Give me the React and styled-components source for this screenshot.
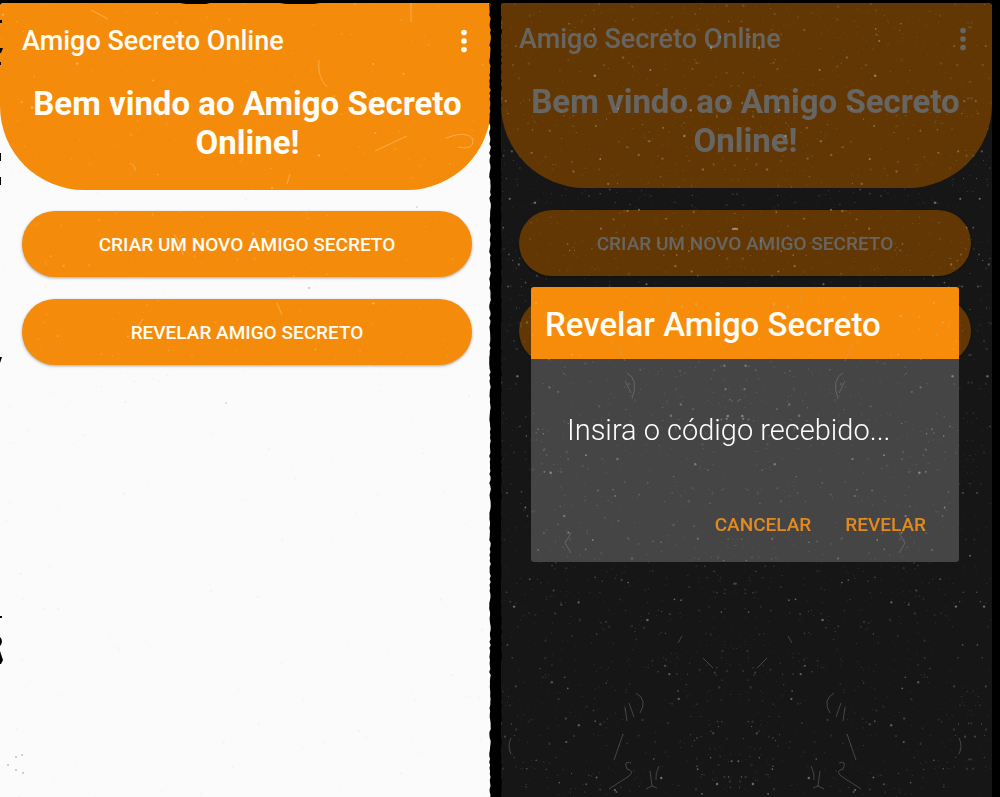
import React from 'react';
import styled, { createGlobalStyle, ThemeProvider } from 'styled-components';

const theme = {
  orange: '#f48b0b',
  light: '#fbfbfb',
  dark: '#383838',
  dialog: '#454545',
  white: '#fffdf5',
};

// small seeded generator, keeps the grain the same on every render
const createRandom = (seed) => {
  let value = seed;
  return () => {
    value = (value * 16807) % 2147483647;
    return value / 2147483647;
  };
};

const createSpecks = (seed, count, width) => {
  const random = createRandom(seed);
  return Array.from({ length: count }, () => ({
    x: random() * width,
    y: random() * 794,
    r: 0.4 + Math.pow(random(), 5) * 0.9,
    opacity: 0.14 + Math.pow(random(), 3) * 0.5,
  }));
};

// worn vertical border, filled from the outer side
const createEdge = (seed, outer, base, depth) => {
  const random = createRandom(seed);
  let d = `M${outer} 0`;
  for (let y = 0; y <= 796; y += 3) {
    d += ` L${(base + (random() - 0.5) * depth).toFixed(1)} ${y}`;
  }
  return `${d} L${outer} 796 Z`;
};

const lightSpecks = createSpecks(4821, 2000, 491);
const darkSpecks = createSpecks(9137, 2600, 236);

const Specks = ({ items }) =>
  items.map((s, i) => (
    <circle key={i} cx={s.x} cy={s.y} r={s.r} opacity={s.opacity} />
  ));

const LightGrain = () => (
  <Grain viewBox='0 0 491 794' preserveAspectRatio='xMinYMin slice' aria-hidden='true'>
    <g fill='#ffe2b0' opacity='0.8'>
      <Specks items={lightSpecks} />
    </g>
    <g fill='none' stroke='#ffd08a' strokeWidth='0.7' opacity='0.7'>
      <path d='M91 7 L108 16 M319 57 Q317 74 327 84 M411 0 V19 M446 135 q20 -8 27 1 q1 12 -15 8 M375 148 l32 -15 M130 160 q8 5 4 8 M290 171 l-3 10 M174 231 l5 8 l4 13 M277 300 l5 12 M138 323 l5 -7' />
    </g>
    <g fill='#999' opacity='0.6'>
      <circle cx='309' cy='285' r='1' />
      <circle cx='417' cy='204' r='0.8' />
      <circle cx='16' cy='754' r='1' />
      <circle cx='22' cy='752' r='1' />
      <circle cx='8' cy='762' r='1' />
      <circle cx='16' cy='767' r='1' />
      <circle cx='23' cy='770' r='1' />
      <circle cx='226' cy='400' r='0.8' />
    </g>
    <path
      d='M0 17 h2 v3 h-2z M0 45 h3 l-2 5 h-1z M0 59 h1 v3 h-1z M0 150 h1 v8 h-1z M0 174 h1 v8 h-1z M0 354 h2 l-2 6z M0 613 h2 v2 h-2z M0 634 q4 4 0 9z M0 648 l3 9 l-2 4 h-1z'
      fill='#000'
    />
    <path d={createEdge(77, 493, 490, 1.6)} fill='#000' />
    <path d='M280 0 h40 l-6 1 h-28z M180 0 h30 l-4 1 h-20z' fill='#000' />
  </Grain>
);

const DarkGrain = () => (
  <Grain viewBox='0 0 491 794' preserveAspectRatio='xMinYMin slice' aria-hidden='true'>
    <defs>
      <g id='dust-half'>
        <g fill='#d8d2c8' opacity='0.75'>
          <Specks items={darkSpecks} />
        </g>
        <g fill='none' stroke='#b5b0a8' strokeWidth='0.7' opacity='0.45'>
          <path d='M124 731 l-9 26 M130 700 l5 14 M126 704 l2 14 M137 690 q12 7 4 20 M128 370 q12 6 5 26 M126 378 l6 12 M132 760 q-8 -3 -4 6 q8 2 2 7 l-20 13 M160 763 q-4 8 -3 14 M151 768 l2 15 l-6 3 M153 783 l5 2 M12 735 q-4 8 0 16 M179 640 l4 -7 M204 655 l10 10 M72 530 l-6 10 l6 10 M120 305 l5 12 M118 340 l8 18 M170 290 v8' />
        </g>
      </g>
    </defs>
    <use href='#dust-half' x='-2' />
    <use href='#dust-half' transform='translate(470 0) scale(-1 1)' />
    <g fill='#d8d2c8' opacity='0.75' transform='translate(468 0)'>
      <Specks items={darkSpecks.filter((s) => s.x < 22)} />
    </g>
    <path d={createEdge(31, -2, 0, 2)} fill='#000' />
  </Grain>
);

const AppBar = ({ title }) => (
  <Toolbar>
    <ToolbarTitle>{title}</ToolbarTitle>
    <MenuButton type='button' aria-label='Menu'>
      <svg viewBox='0 0 24 24' width='34' height='34' fill='currentColor'>
        <circle cx='12' cy='6' r='2' />
        <circle cx='12' cy='12' r='2' />
        <circle cx='12' cy='18' r='2' />
      </svg>
    </MenuButton>
  </Toolbar>
);

const Home = ({ dark }) => (
  <>
    <Header $dark={dark}>
      <AppBar title='Amigo Secreto Online' />
      <Welcome>Bem vindo ao Amigo Secreto Online!</Welcome>
    </Header>
    <Actions $dark={dark}>
      <ActionButton type='button'>Criar um novo amigo secreto</ActionButton>
      <ActionButton type='button'>Revelar amigo secreto</ActionButton>
    </Actions>
  </>
);

const RevealDialog = () => (
  <Backdrop>
    <Dialog role='dialog' aria-labelledby='reveal-title'>
      <DialogTitle id='reveal-title'>Revelar Amigo Secreto</DialogTitle>
      <DialogBody>
        <CodeInput
          type='text'
          aria-label='Insira o código recebido...'
          placeholder='Insira o código recebido...'
        />
        <DialogActions>
          <TextButton type='button'>Cancelar</TextButton>
          <TextButton type='button'>Revelar</TextButton>
        </DialogActions>
      </DialogBody>
    </Dialog>
  </Backdrop>
);

const App = () => {
  return (
    <ThemeProvider theme={theme}>
      <GlobalStyle />
      <Page>
        <Screen>
          <Home />
          <LightGrain />
        </Screen>
        <Screen $dark>
          <Home dark />
          <RevealDialog />
          <DarkGrain />
        </Screen>
      </Page>
    </ThemeProvider>
  );
};

const GlobalStyle = createGlobalStyle`
  * {
    box-sizing: border-box;
  }

  body {
    margin: 0;
    background: #000;
    font-family: Roboto, 'Liberation Sans', sans-serif;
  }

  button,
  input {
    font-family: inherit;
    border: 0;
    padding: 0;
    margin: 0;
    background: none;
  }
`;

const Page = styled.main`
  min-height: 100vh;
  display: grid;
  grid-template-columns: 1fr 1fr;
  gap: 10px;
  padding: 3px 8px 0 0;
`;

const Screen = styled.section`
  position: relative;
  overflow: hidden;
  border-radius: 4px 4px 0 0;
  background: ${({ theme, $dark }) => ($dark ? theme.dark : theme.light)};
`;

const Header = styled.header`
  background: ${({ theme }) => theme.orange};
  color: ${({ theme }) => theme.white};
  border-radius: 0 0 84px 84px;
  padding: ${({ $dark }) => ($dark ? '0 20px 28px 18px' : '2px 18px 28px 22px')};
`;

const Toolbar = styled.div`
  display: flex;
  align-items: center;
  justify-content: space-between;
  height: 72px;
`;

const ToolbarTitle = styled.span`
  font-size: 27px;
  font-weight: 500;
`;

const MenuButton = styled.button`
  display: flex;
  justify-content: center;
  width: 18px;
  color: inherit;

  svg {
    flex-shrink: 0;
  }
`;

const Welcome = styled.h1`
  margin: 7px 0 0;
  font-size: 33px;
  line-height: 39px;
  font-weight: 700;
  text-align: center;
`;

const Actions = styled.div`
  display: flex;
  flex-direction: column;
  gap: 22px;
  padding: ${({ $dark }) => ($dark ? '22px 21px 0 18px' : '21px 19px 0 22px')};
`;

const ActionButton = styled.button`
  height: 66px;
  border-radius: 33px;
  background: ${({ theme }) => theme.orange};
  color: ${({ theme }) => theme.white};
  font-size: 19px;
  font-weight: 500;
  text-transform: uppercase;
  box-shadow: 0 1px 3px rgba(0, 0, 0, 0.35);
`;

const Backdrop = styled.div`
  position: absolute;
  inset: 0;
  padding: 284px 33px 0 30px;
  background: rgba(0, 0, 0, 0.6);
`;

const Dialog = styled.div`
  overflow: hidden;
  border-radius: 3px;
  background: ${({ theme }) => theme.dialog};
`;

const DialogTitle = styled.h2`
  margin: 0;
  padding: 3px 14px 0;
  background: #f68c09;
  color: ${({ theme }) => theme.white};
  font-size: 33px;
  line-height: 69px;
  font-weight: 500;
`;

const DialogBody = styled.div`
  padding: 48px 33px 13px 36px;
`;

const CodeInput = styled.input`
  width: 100%;
  height: 46px;
  color: #fff;
  font-size: 29px;
  font-weight: 300;

  &::placeholder {
    color: #fff;
    opacity: 1;
  }
`;

const DialogActions = styled.div`
  display: flex;
  justify-content: flex-end;
  gap: 34px;
  margin-top: 46px;
`;

const TextButton = styled.button`
  height: 50px;
  color: #e28a20;
  font-size: 19px;
  font-weight: 500;
  text-transform: uppercase;
`;

const Grain = styled.svg`
  position: absolute;
  inset: 0;
  width: 100%;
  height: 100%;
  pointer-events: none;
`;

export default App;
